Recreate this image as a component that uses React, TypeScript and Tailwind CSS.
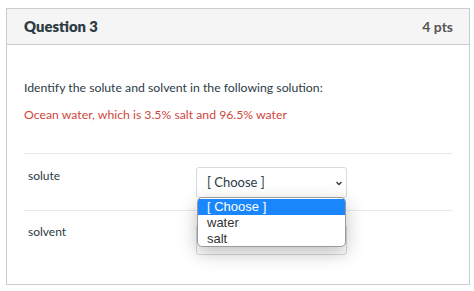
import React from "react";

export default function App() {
  return (
    <div className="w-[474px] h-[291px] bg-white pt-[8px] pl-[6px]" style={{ fontFamily: "Lato, 'Liberation Sans', sans-serif" }}>
      <div className="w-[464px] h-[277px] border border-[#c7cdd1] flex flex-col">
        <div className="h-[36px] bg-[#f5f5f5] border-b border-[#c7cdd1] flex items-center justify-between pl-[17px] pr-[16px]">
          <span className="text-[14.8px] font-extrabold text-[#2d3b45]">Question 3</span>
          <span className="text-[14px] font-bold text-[#555]">4 pts</span>
        </div>
        <div className="px-[17px] pt-[34px] flex flex-col">
          <p className="text-[12.25px] text-[#2d3b45] leading-[17px]">Identify the solute and solvent in the following solution:</p>
          <p className="text-[12.25px] text-[#d0463d] leading-[17px] mt-[10px]">Ocean water, which is 3.5% salt and 96.5% water</p>
          <div className="mt-[30px] border-t border-[#e6e8ea]">
            <div className="h-[57px] flex border-b border-[#e6e8ea]">
              <div className="w-[172px] pl-[4px] pt-[13px] text-[12px] text-[#2d3b45]">solute</div>
              <div className="pt-[13px] relative">
                <div className="w-[151px] h-[31px] border border-[#d7dadd] rounded-[3px] flex items-center justify-between pl-[10px] pr-[2px] text-[13px] text-[#2d3b45] bg-white">
                  <span>[ Choose ]</span>
                  <svg width="10" height="10" viewBox="0 0 10 10"><path d="M2.5 4 L5 6.5 L7.5 4" fill="none" stroke="#333" strokeWidth="1.3" /></svg>
                </div>
              </div>
            </div>
            <div className="h-[56px] flex">
              <div className="w-[172px] pl-[4px] pt-[12px] text-[12px] text-[#2d3b45]">solvent</div>
              <div className="pt-[13px] relative">
                <div className="w-[151px] h-[31px] border border-[#d7dadd] rounded-[3px] bg-white"></div>
                <div className="absolute left-[1px] top-[-14px] w-[149px] h-[50px] bg-white border border-[#9a9a9a] rounded-[5px] shadow-[0_6px_18px_rgba(0,0,0,0.25)] overflow-hidden flex flex-col py-[1px]" style={{ fontFamily: "'Liberation Sans', Arial, sans-serif" }}>
                  <div className="h-[16px] bg-[#1a86fb] text-white text-[13px] leading-[16px] pl-[9px]">[ Choose ]</div>
                  <div className="h-[16px] text-[#333] text-[13px] leading-[16px] pl-[9px]">water</div>
                  <div className="h-[16px] text-[#333] text-[13px] leading-[16px] pl-[9px]">salt</div>
                </div>
              </div>
            </div>
          </div>
        </div>
      </div>
    </div>
  );
}
